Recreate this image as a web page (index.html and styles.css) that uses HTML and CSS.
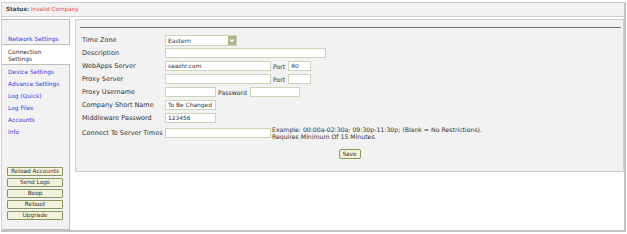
FILE: index.html
```html
<!DOCTYPE html>
<html>
<head>
<meta charset="utf-8">
<link rel="stylesheet" href="styles.css">
</head>
<body>
<div class="frame">
  <div class="status"><b>Status:</b> <span class="err">Invalid Company</span></div>
  <div class="main">
    <div class="side">
      <div class="tab first"><a class="lnk">Network Settings</a></div>
      <div class="tab active">Connection<br>Settings</div>
      <div class="rest">
        <ul class="links">
          <li><a class="lnk">Device Settings</a></li>
          <li><a class="lnk">Advance Settings</a></li>
          <li><a class="lnk">Log (Quick)</a></li>
          <li><a class="lnk">Log Files</a></li>
          <li><a class="lnk">Accounts</a></li>
          <li><a class="lnk">Info</a></li>
        </ul>
        <div class="buttons">
          <button class="btn">Reload Accounts</button>
          <button class="btn">Send Logs</button>
          <button class="btn">Boop</button>
          <button class="btn">Reboot</button>
          <button class="btn">Upgrade</button>
        </div>
      </div>
    </div>
    <div class="content">
      <div class="panel">
        <div class="rule"></div>
        <div class="form">
          <div class="lbl">Time Zone</div>
          <div class="fld"><div class="sel"><span class="seltext">Eastern</span><span class="arrow"><svg width="6" height="5" viewBox="0 0 6 5"><path d="M1 1.5 L3 3.5 L5 1.5" fill="none" stroke="#fff" stroke-width="1.2"/></svg></span></div></div>

          <div class="lbl">Description</div>
          <div class="fld"><input class="in w161" type="text"></div>

          <div class="lbl">WebApps Server</div>
          <div class="fld"><input class="in w106" type="text" value="saashr.com"><span class="il">Port</span><input class="in w23" type="text" value="80"></div>

          <div class="lbl">Proxy Server</div>
          <div class="fld"><input class="in w106" type="text"><span class="il">Port</span><input class="in w23" type="text"></div>

          <div class="lbl">Proxy Username</div>
          <div class="fld"><input class="in w51" type="text"><span class="il">Password</span><input class="in w50" type="text"></div>

          <div class="lbl">Company Short Name</div>
          <div class="fld"><input class="in w51" type="text" value="To Be Changed"></div>

          <div class="lbl">Middleware Password</div>
          <div class="fld"><input class="in w51" type="text" value="123456"></div>

          <div class="lbl last">Connect To Server Times</div>
          <div class="fld last"><input class="in w106" type="text"><span class="note">Example: 00:00a-02:30a; 09:30p-11:30p; (Blank = No Restrictions).<br>Requires Minimum Of 15 Minutes.</span></div>
        </div>
        <div class="save-row"><button class="btn save">Save</button></div>
      </div>
    </div>
  </div>
</div>
</body>
</html>
```
FILE: styles.css
```css
html, body {
  margin: 0;
  padding: 0;
  background: #fff;
}
body {
  font-family: "DejaVu Sans", Verdana, sans-serif;
  font-size: 6.5px;
  color: #333;
}
.frame {
  margin: 2px 0 0 1px;
  width: 622px;
  height: 227px;
  border-top: 1px solid #cfcfcf;
  border-left: 1px solid #cfcfcf;
  border-right: 2px solid #c4c4c4;
  border-bottom: 2px solid #c4c4c4;
  display: flex;
  flex-direction: column;
}
.status {
  height: 13px;
  line-height: 13px;
  padding-left: 4px;
  font-size: 5.7px;
  background: #f2f2f2;
  border-bottom: 1px solid #cfcfcf;
}
.status b { font-weight: bold; color: #444; }
.err { color: #f23a3a; }
.main {
  flex: 1;
  display: flex;
  padding-top: 2px;
  min-height: 0;
}
.side {
  width: 68px;
  display: flex;
  flex-direction: column;
  font-size: 5.9px;
}
.lnk { color: #3a3ad6; text-decoration: none; }
.tab { box-sizing: border-box; padding-left: 6px; }
.tab.first {
  height: 26px;
  background: #f2f2f2;
  border-top: 1px solid #bdbdbd;
  border-right: 1px solid #bdbdbd;
  border-bottom: 1px solid #bdbdbd;
  padding-top: 16px;
  line-height: 7px;
}
.tab.active {
  height: 19px;
  background: #fff;
  padding-top: 4px;
  line-height: 6.5px;
  color: #333;
}
.rest {
  flex: 1;
  background: #f2f2f2;
  border-top: 1px solid #bdbdbd;
  border-right: 1px solid #bdbdbd;
  border-bottom: 1px solid #bdbdbd;
  display: flex;
  flex-direction: column;
}
.links {
  list-style: none;
  margin: 0;
  padding: 1px 0 0 6px;
}
.links li { height: 12px; line-height: 12px; }
.buttons {
  margin-top: auto;
  padding: 0 0 9px 5px;
  display: flex;
  flex-direction: column;
  gap: 2px;
}
.btn {
  box-sizing: border-box;
  width: 56px;
  height: 9px;
  padding: 0;
  margin: 0;
  font-family: "DejaVu Sans", Verdana, sans-serif;
  font-size: 5.8px;
  line-height: 7px;
  color: #333;
  background: #f4f1dc;
  border: 1px solid #87965c;
  border-radius: 1px;
}
.content {
  flex: 1;
  padding-left: 5px;
}
.panel {
  box-sizing: border-box;
  height: 153px;
  background: #f2f2f2;
  border: 1px solid #cfcfcf;
}
.rule {
  margin: 7px 2px 0 4px;
  border-top: 1px solid #6e6e6e;
}
.form {
  margin-top: 7px;
  padding-left: 6px;
  display: grid;
  grid-template-columns: 83px auto;
  row-gap: 3px;
  align-items: center;
}
.lbl { line-height: 10px; color: #333; }
.fld { display: flex; align-items: center; height: 10px; }
.fld.last { height: 14px; }
.in {
  box-sizing: border-box;
  height: 10px;
  margin: 0;
  padding: 0 2px;
  border: 1px solid #cdd5b7;
  background: #fff;
  font-family: "DejaVu Sans", Verdana, sans-serif;
  font-size: 5.9px;
  color: #333;
  outline: none;
}
.w161 { width: 161px; }
.w106 { width: 106px; }
.w23 { width: 23px; }
.w51 { width: 51px; }
.w50 { width: 50px; }
.il { margin: 0 3px 0 2px; font-size: 6.2px; }
.note { margin-left: 1px; line-height: 7px; font-size: 6.2px; }
.sel {
  box-sizing: border-box;
  width: 72px;
  height: 11px;
  border: 1px solid #cdd5b7;
  background: #fff;
  display: flex;
  align-items: stretch;
  font-size: 6px;
}
.seltext { flex: 1; padding-left: 2px; line-height: 9px; }
.arrow {
  width: 8px;
  background: #a9b78a;
  display: flex;
  align-items: center;
  justify-content: center;
}
.save-row {
  margin-top: 9px;
  display: flex;
  justify-content: center;
}
.btn.save {
  width: 22px;
  height: 10px;
  border-radius: 2px;
}
```
